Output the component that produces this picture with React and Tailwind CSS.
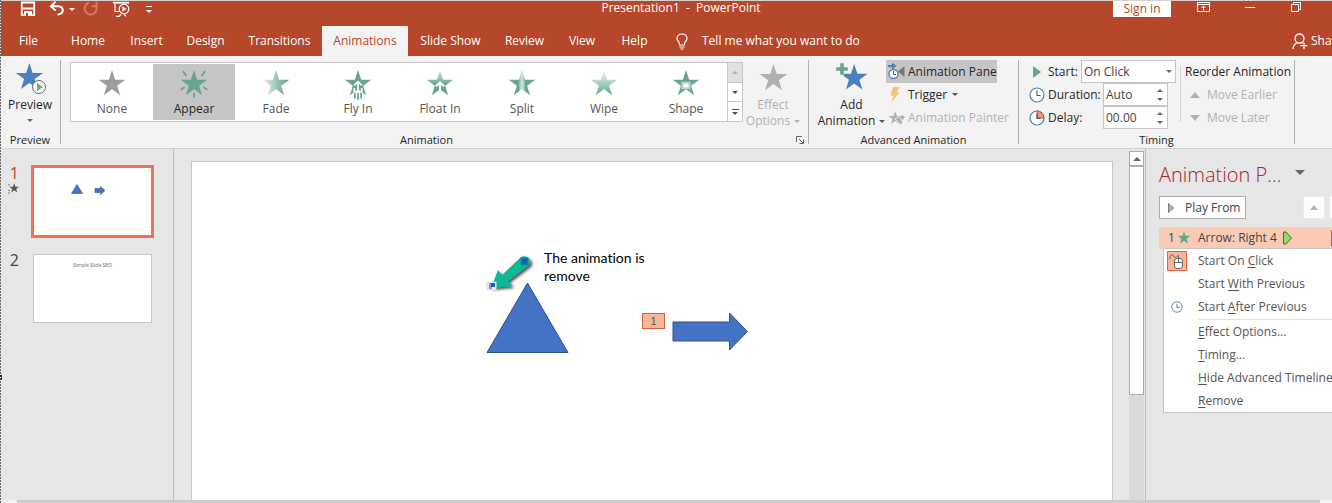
import React, { useState } from 'react'

const STAR = '12,0 14.7,8.3 23.4,8.3 16.4,13.4 19,21.7 12,16.6 5,21.7 7.6,13.4 0.6,8.3 9.3,8.3'

const tabs = [
    { name: 'File', width: 'w-[57px]' },
    { name: 'Home', width: 'w-[62px]' },
    { name: 'Insert', width: 'w-[55px]' },
    { name: 'Design', width: 'w-[63px]' },
    { name: 'Transitions', width: 'w-[85px]' },
    { name: 'Animations', width: 'w-[86px]' },
    { name: 'Slide Show', width: 'w-[85px]' },
    { name: 'Review', width: 'w-[63px]' },
    { name: 'View', width: 'w-[52px]' },
    { name: 'Help', width: 'w-[53px]' },
]

const effects = ['None', 'Appear', 'Fade', 'Fly In', 'Float In', 'Split', 'Wipe', 'Shape']

function Caret({ up, className = '' }) {
    return (
        <svg viewBox="0 0 6 3" className={`h-[3px] w-[6px] shrink-0 fill-current ${className}`}>
            <path d={up ? 'M0 3L3 0L6 3Z' : 'M0 0L3 3L6 0Z'} />
        </svg>
    )
}

function Star({ fill, className, children }) {
    return (
        <svg viewBox="0 0 24 24" className={className}>
            <polygon points={STAR} fill={fill} />
            {children}
        </svg>
    )
}

function EffectIcon({ name }) {
    const fills = { None: '#9d9d9d', Fade: 'url(#fade)', 'Float In': 'url(#float)', Split: 'url(#split)', Wipe: 'url(#wipe)' }

    return (
        <Star fill={fills[name] || '#68a490'} className="h-[28px] w-[28px] overflow-visible">
            {name === 'Appear' && (
                <path d="M2.5 1L5.5 5.2M21.5 1L18.5 5.2M0.5 17L4 14.8M23.5 17L20 14.8M12 19.5V23.5" stroke="#68a490" strokeWidth="1.6" />
            )}
            {name === 'Fly In' && (
                <g fill="none">
                    <path d="M12 19V9.5M8.8 13.2L12 10L15.2 13.2M8.8 19V15.5M15.2 19V15.5" stroke="#fff" strokeWidth="1.5" />
                    <path d="M9.3 19.5V24.5M12 19.5V25.5M14.7 19.5V24.5" stroke="#68a490" strokeWidth="1.5" />
                </g>
            )}
            {name === 'Float In' && (
                <path d="M12 19.5V10.5M8.6 14L12 10.6L15.4 14" fill="none" stroke="#fff" strokeWidth="1.8" />
            )}
            {name === 'Shape' && (
                <g>
                    <rect x="8" y="10" width="8" height="6.5" fill="#b5d3c9" />
                    <rect x="9.8" y="11.8" width="4.4" height="3" fill="#fff" />
                </g>
            )}
        </Star>
    )
}

function Gradients() {
    return (
        <svg className="absolute h-0 w-0">
            <defs>
                <linearGradient id="fade">
                    <stop offset="0" stopColor="#eaf3f0" />
                    <stop offset="0.9" stopColor="#68a490" />
                </linearGradient>
                <linearGradient id="float" x2="0" y2="1">
                    <stop offset="0" stopColor="#e0eeea" />
                    <stop offset="0.55" stopColor="#68a490" />
                </linearGradient>
                <linearGradient id="split">
                    <stop offset="0.38" stopColor="#68a490" />
                    <stop offset="0.39" stopColor="#8dbbac" />
                    <stop offset="0.5" stopColor="#d5e6e0" />
                    <stop offset="0.61" stopColor="#8dbbac" />
                    <stop offset="0.62" stopColor="#68a490" />
                </linearGradient>
                <linearGradient id="wipe" x2="0" y2="1">
                    <stop offset="0" stopColor="#f3f9f7" />
                    <stop offset="1" stopColor="#68a490" />
                </linearGradient>
            </defs>
        </svg>
    )
}

function Clock({ red, className }) {
    return (
        <svg viewBox="0 0 16 16" fill="none" className={className}>
            <circle cx="8" cy="8" r="7" fill="#fff" stroke="#4a80b4" strokeWidth="1.2" />
            {red && <path d="M8 8V1A7 7 0 0 1 15 8Z" fill="#ee9580" stroke="#d85236" />}
            <path d="M8 3.5V8.5H11.5" stroke="#555" strokeWidth="1.1" />
        </svg>
    )
}

function TitleBar() {
    return (
        <div className="grid h-[26px] grid-cols-[1fr_auto_1fr] border-t border-[#d8d0cd] text-white">
            <div className="flex items-start pl-[20px]">
                <button aria-label="Save">
                    <svg viewBox="0 0 16 16" className="h-4 w-4" fill="none">
                        <path d="M1.8 1.5H14.2V14.2H1.8Z" stroke="#fff" strokeWidth="1.8" />
                        <path d="M3 7.5H13" stroke="#fff" strokeWidth="2" />
                        <path d="M4 10.2H12V15H4Z" fill="#fff" />
                        <path d="M6 12H8V15H6Z" fill="#b7472a" />
                    </svg>
                </button>
                <button aria-label="Undo" className="ml-[13px] flex items-center">
                    <svg viewBox="0 0 16 16" className="h-4 w-4" fill="none" stroke="#fff" strokeWidth="2">
                        <path d="M6.5 0.8L2 5.2L6.5 9.6M2 5.2H9C15.5 5.2 15.5 13.4 8.5 13.4" />
                    </svg>
                    <Caret className="ml-[4px]" />
                </button>
                <button aria-label="Redo" className="ml-[8px] text-[#d07c66]">
                    <svg viewBox="0 0 16 16" className="h-4 w-4" fill="none" stroke="currentColor" strokeWidth="2">
                        <path d="M6 1.8A6 6 0 1 0 12.8 4.5M9 5.2H13.5V0.5" />
                    </svg>
                </button>
                <button aria-label="Start from beginning" className="ml-[13px]">
                    <svg viewBox="0 0 18 16" className="h-4 w-[18px]" fill="none" stroke="#fff">
                        <path d="M1 1.7H17" strokeWidth="1.8" />
                        <path d="M3 2.5V10.5H7M7 15.2L9 13.5M14 15.2L12 13.5M4 15.3H8" strokeWidth="1.2" />
                        <circle cx="12" cy="8" r="4.8" strokeWidth="1.2" />
                        <path d="M10.3 5.3V10.7L14.6 8Z" fill="#fff" stroke="none" />
                    </svg>
                </button>
                <button aria-label="Customize toolbar" className="mt-[5px] ml-[16px] flex flex-col gap-[3px]">
                    <span className="h-px w-[6px] bg-white" />
                    <Caret />
                </button>
            </div>

            <p className="pl-[30px] text-[12px] leading-[14px] whitespace-pre">Presentation1  -  PowerPoint</p>

            <div className="flex items-start justify-end">
                <button className="h-[16px] w-[58px] bg-white text-[12px] leading-[14px] text-[#b7472a]">Sign in</button>
                <button aria-label="Ribbon display options" className="ml-[26px]">
                    <svg viewBox="0 0 13 12" className="h-3 w-[13px]" fill="none" stroke="#fff">
                        <path d="M0.5 1.5H12.5V10.5H0.5ZM0.5 3.5H12.5M6.5 10V5M4.5 7L6.5 5L8.5 7" />
                    </svg>
                </button>
                <button aria-label="Minimize" className="mt-[6px] ml-[35px] h-px w-[10px] bg-white" />
                <button aria-label="Restore" className="mt-px mr-[31px] ml-[36px]">
                    <svg viewBox="0 0 10 10" className="h-[10px] w-[10px]" fill="none" stroke="#fff">
                        <path d="M0.5 2.5H7.5V9.5H0.5ZM2.5 2.5V0.5H9.5V7.5H7.5" />
                    </svg>
                </button>
            </div>
        </div>
    )
}

function TabBar({ active, setActive }) {
    return (
        <div className="flex h-[30px] text-[12px] text-white">
            {tabs.map(tab => (
                <button
                    key={tab.name}
                    onClick={() => setActive(tab.name)}
                    className={`shrink-0 whitespace-nowrap ${tab.width} ${active === tab.name ? 'bg-[#f3f3f3] text-[#b7472a]' : ''}`}
                >
                    {tab.name}
                </button>
            ))}
            <button className="ml-[15px] flex shrink-0 items-center gap-[14px]">
                <svg viewBox="0 0 12 17" className="h-[17px] w-[12px]" fill="none" stroke="#fff" strokeWidth="1.2">
                    <path d="M3.5 12V10.5C3.5 9 1 8 1 5.5C1 2.8 3.2 1 6 1S11 2.8 11 5.5C11 8 8.5 9 8.5 10.5V12ZM3.5 14H8.5M4.5 16H7.5" />
                </svg>
                Tell me what you want to do
            </button>
            <button className="ml-auto flex w-[40px] shrink-0 items-center gap-[3px] overflow-hidden">
                <svg viewBox="0 0 16 17" className="h-[17px] w-[16px] shrink-0" fill="none" stroke="#fff" strokeWidth="1.3">
                    <circle cx="7.5" cy="5.5" r="4.5" />
                    <path d="M1 16C1.2 12.5 3 10.5 5.5 9.7M9.5 9.5L11 10.3M12 9.5V16M8.5 12.7H15.5" />
                </svg>
                Share
            </button>
        </div>
    )
}

function Group({ label, className, labelClass = '', children, launcher }) {
    return (
        <section className={`relative flex h-[84px] shrink-0 flex-col justify-between border-r border-[#b1b1b1] ${className}`}>
            {children}
            <div className={`text-center text-[11px] leading-[8px] text-[#262626] ${labelClass}`}>{label}</div>
            {launcher && (
                <button aria-label="More animation options" className="absolute right-[4px] bottom-0">
                    <svg viewBox="0 0 8 8" className="h-2 w-2" fill="none" stroke="#666">
                        <path d="M0.5 6V0.5H6M3 3L7 7M7.5 3.5V7.5H3.5" />
                    </svg>
                </button>
            )}
        </section>
    )
}

function Ribbon() {
    const [selected, setSelected] = useState('Appear')

    return (
        <div className="flex h-[93px] shrink-0 overflow-hidden border-b border-[#d0d0d0] bg-[#f3f3f3] pt-[4px] text-[12px] text-[#262626]">
            <Group label="Preview" className="w-[61px]">
                <button className="flex flex-col items-center pt-[3px] leading-[16px]">
                    <svg viewBox="0 0 31 31" className="mb-[3px] h-[31px] w-[31px]">
                        <g transform="scale(1.2)"><polygon points={STAR} fill="#4a80bd" /></g>
                        <circle cx="24" cy="24" r="6.5" fill="#fff" stroke="#666" />
                        <path d="M22 20V28L28 24Z" fill="#68a490" />
                    </svg>
                    Preview
                    <Caret className="mt-[6px] text-[#666]" />
                </button>
            </Group>

            <Group label="Animation" className="w-[748px]" labelClass="pr-[16px]" launcher>
                <div className="ml-[9px] flex pt-[2px]">
                    <div className="flex h-[60px] border border-[#c6c6c6] bg-white">
                        <div className="flex py-px">
                            {effects.map(name => (
                                <button
                                    key={name}
                                    onClick={() => setSelected(name)}
                                    className={`flex w-[82px] flex-col items-center pt-[6px] leading-[22px] ${selected === name ? 'bg-[#c5c5c5] text-[#262626]' : 'text-[#555]'}`}
                                >
                                    <EffectIcon name={name} />
                                    {name}
                                </button>
                            ))}
                        </div>
                        <div className="flex w-[15px] flex-col border-l border-[#c6c6c6] text-[#555]">
                            <button aria-label="Previous effects" className="flex flex-1 items-center justify-center bg-[#e1e1e1] text-[#b1b1b1]"><Caret up /></button>
                            <button aria-label="Next effects" className="flex flex-1 items-center justify-center border-y border-[#c6c6c6]"><Caret /></button>
                            <button aria-label="All effects" className="flex flex-1 flex-col items-center justify-center gap-[2px]">
                                <span className="h-px w-[7px] bg-[#555]" />
                                <Caret />
                            </button>
                        </div>
                    </div>
                    <button disabled className="flex h-[60px] w-[60px] flex-col items-center pt-[2px] leading-[16px] text-[#b1b1b1]">
                        <Star fill="#b1afb0" className="mb-[4px] h-[29px] w-[29px] shrink-0" />
                        <span>Effect</span>
                        <span className="flex items-center gap-[4px]">Options <Caret /></span>
                    </button>
                </div>
            </Group>

            <Group label="Advanced Animation" className="w-[210px]">
                <div className="flex pl-[8px]">
                    <button className="flex w-[69px] flex-col items-center pt-[3px] leading-[16px]">
                        <svg viewBox="0 0 32 31" className="mb-[3px] h-[31px] w-[32px] shrink-0">
                            <g transform="translate(4 1) scale(1.18)"><polygon points={STAR} fill="#4a80bd" /></g>
                            <path d="M4 0H8V4H12V8H8V12H4V8H0V4H4Z" fill="#68a490" stroke="#f3f3f3" strokeWidth="0.5" />
                        </svg>
                        <span>Add</span>
                        <span className="flex items-center gap-[4px] whitespace-nowrap">Animation <Caret className="text-[#555]" /></span>
                    </button>
                    <div className="flex flex-col items-start">
                        <button className="flex h-[23px] items-center gap-[3px] bg-[#c5c5c5] pl-[2px] whitespace-nowrap">
                            <svg viewBox="0 0 17 17" className="h-[17px] w-[17px]" fill="none">
                                <path d="M0 3H6M4 0.5L7 3L4 5.5" stroke="#4a80bd" strokeWidth="1.8" />
                                <circle cx="5.5" cy="11" r="4.5" fill="#fff" stroke="#4a80b4" strokeWidth="1.3" />
                                <path d="M5.5 8V11.5H8" stroke="#555" />
                                <path d="M16.5 3V14L10 8.5Z" fill="#777" />
                            </svg>
                            Animation Pane
                        </button>
                        <button className="flex h-[23px] items-center gap-[5px] px-[2px]">
                            <svg viewBox="0 0 15 15" className="h-[15px] w-[15px] fill-[#f3c577]">
                                <path d="M5 0H12L8.5 5.5H11.5L3.5 15L5.5 8.5H2.5Z" />
                            </svg>
                            Trigger <Caret className="text-[#555]" />
                        </button>
                        <button disabled className="flex h-[23px] items-center gap-[3px] px-[2px] whitespace-nowrap text-[#b1b1b1]">
                            <svg viewBox="0 0 17 16" className="h-[16px] w-[17px]">
                                <g transform="translate(0 1) scale(0.6)"><polygon points={STAR} fill="#b1b1b1" /></g>
                                <path d="M7 9L11 6.5L15 12L12.5 15Z" fill="#b1b1b1" stroke="#f3f3f3" strokeWidth="0.8" />
                                <path d="M12 7.5L14 5L17 7L14.5 10Z" fill="#b1b1b1" />
                            </svg>
                            Animation Painter
                        </button>
                    </div>
                </div>
            </Group>

            <Group label="Timing" className="w-[276px]">
                <div className="flex pl-[10px]">
                    <div className="flex w-[147px] flex-col">
                        <div className="flex h-[23px] items-center">
                            <svg viewBox="0 0 8 12" className="ml-[4px] h-3 w-2 fill-[#68a490]"><path d="M0 0V12L8 6Z" /></svg>
                            <label htmlFor="start" className="ml-[7px]">Start:</label>
                            <div className="relative ml-auto h-[23px] w-[95px]">
                                <select id="start" className="h-full w-full appearance-none border border-[#c6c6c6] bg-white pl-[2px] text-[#444]">
                                    <option>On Click</option>
                                    <option>With Previous</option>
                                    <option>After Previous</option>
                                </select>
                                <Caret className="pointer-events-none absolute top-[10px] right-[4px] text-[#666]" />
                            </div>
                        </div>
                        <Spinner id="duration" label="Duration:" value="Auto" />
                        <Spinner id="delay" label="Delay:" value="00.00" red />
                    </div>
                    <div className="mt-[6px] ml-[4px] h-[56px] w-px bg-[#d4d4d4]" />
                    <div className="ml-[4px] leading-[23px] whitespace-nowrap">
                        <p>Reorder Animation</p>
                        <button disabled className="flex items-center gap-[7px] pl-[5px] text-[#b1b1b1]">
                            <svg viewBox="0 0 10 6" className="h-[6px] w-[10px] fill-current"><path d="M0 6L5 0L10 6Z" /></svg>
                            Move Earlier
                        </button>
                        <button disabled className="flex items-center gap-[7px] pl-[5px] text-[#b1b1b1]">
                            <svg viewBox="0 0 10 6" className="h-[6px] w-[10px] fill-current"><path d="M0 0L5 6L10 0Z" /></svg>
                            Move Later
                        </button>
                    </div>
                </div>
            </Group>
        </div>
    )
}

function Spinner({ id, label, value, red }) {
    return (
        <div className="flex h-[23px] items-center pr-[8px]">
            <Clock red={red} className="h-[16px] w-[16px]" />
            <label htmlFor={id} className="ml-[3px]">{label}</label>
            <div className="ml-auto flex h-[23px] w-[65px] border border-[#c6c6c6] bg-white">
                <input id={id} defaultValue={value} className="w-[53px] pl-[2px] text-[#444] outline-none" />
                <div className="flex flex-col justify-center gap-[6px] pr-[4px] text-[#666]">
                    <button aria-label={`Increase ${id}`}><Caret up className="block" /></button>
                    <button aria-label={`Decrease ${id}`}><Caret className="block" /></button>
                </div>
            </div>
        </div>
    )
}

function Thumbnails() {
    return (
        <aside className="flex w-[174px] shrink-0 flex-col gap-[16px] border-r border-[#bdbdbd] pt-[16px]">
            <div className="flex">
                <div className="flex w-[31px] flex-col items-end pr-[12px] text-[#c43e1c]">
                    <span className="text-[16px] leading-[16px]">1</span>
                    <svg viewBox="0 0 12 12" className="mt-[2px] h-[11px] w-[11px]">
                        <g transform="translate(1 0) scale(0.48)"><polygon points={STAR} fill="#555" /></g>
                        <path d="M0 2H2M0 8H2M0 11H2" stroke="#666" />
                    </svg>
                </div>
                <button aria-label="Slide 1" className="h-[73px] w-[123px] border-3 border-[#ef7350] bg-white">
                    <svg viewBox="0 0 117 67" className="h-full w-full" fill="#4472c4" stroke="#2f528f" strokeWidth="0.6">
                        <path d="M43 16.5L48.5 25.5H37.5Z" />
                        <path d="M61 20.5H66.5V18.5L71 22.5L66.5 26.5V24.5H61Z" />
                    </svg>
                </button>
            </div>
            <div className="flex">
                <span className="w-[33px] pr-[14px] text-right text-[16px] leading-[12px] text-[#444]">2</span>
                <button aria-label="Slide 2" className="flex h-[69px] w-[119px] justify-center border border-[#c6c6c6] bg-white pt-[6px] text-[5px] leading-[8px] text-[#666]">
                    Simple Slide SEO
                </button>
            </div>
        </aside>
    )
}

function Slide() {
    return (
        <main className="flex min-w-0 flex-1 border-r border-[#bdbdbd]">
            <div className="relative mt-[12px] ml-[17px] flex-1 overflow-hidden border-x border-t border-[#c6c6c6] bg-white">
                {/* shapes placed on the slide */}
                <svg width="270" height="110" viewBox="0 0 270 110" className="absolute top-[90px] left-[290px]" fill="#4472c4" stroke="#2f528f">
                    <defs>
                        <filter id="shadow" x="-20%" y="-20%" width="150%" height="150%">
                            <feDropShadow dx="2" dy="2" stdDeviation="1.5" floodColor="#000" floodOpacity="0.7" />
                        </filter>
                    </defs>
                    <path d="M45.5 31L86 100.5H5Z" />
                    <path d="M191 70H247.5V61L265.5 79.5L247.5 98V89H191Z" />
                    <path d="M39 5C44 2 51 8 47 13L26 29L30 34L9 36L16 18L20 23Z" fill="#08b898" stroke="none" filter="url(#shadow)" />
                    <rect x="5" y="30" width="9" height="8" fill="#ececf5" stroke="#ddd" />
                    <rect x="7" y="31" width="3" height="6" fill="#8d8de0" stroke="none" />
                    <rect x="9" y="31" width="4" height="4" fill="#0868b0" stroke="none" />
                    <rect x="39" y="6" width="7" height="7" fill="#0868b0" stroke="#168da5" />
                </svg>
                <p className="absolute top-[87px] left-[352px] w-[120px] font-[Lato,sans-serif] text-[14px] leading-[18px] text-black [font-variant-ligatures:none]">
                    The animation is remove
                </p>
                <span className="absolute top-[151px] left-[450px] h-[16px] w-[23px] border border-[#dc5b3b] bg-[#f6b79c] text-center font-['Liberation_Sans',sans-serif] text-[11px] leading-[14px] text-[#555]">
                    1
                </span>
            </div>
            <div className="ml-[16px] flex w-[16px] flex-col pt-[2px] pr-px">
                <div className="flex-1 bg-[#dadada]">
                    <button aria-label="Scroll up" className="flex h-[15px] w-full items-center justify-center border border-[#ababab] bg-white text-[#666]">
                        <svg viewBox="0 0 8 4" className="h-[4px] w-[8px] fill-current"><path d="M0 4L4 0L8 4Z" /></svg>
                    </button>
                    <div className="h-[229px] border border-[#ababab] bg-white" />
                </div>
            </div>
        </main>
    )
}

function MenuItem({ before = '', letter, after, icon }) {
    return (
        <li>
            <button className="flex h-[23px] w-full items-center whitespace-nowrap">
                <span className="flex w-[34px] shrink-0 pl-[3px]">{icon}</span>
                <span>{before}<span className="underline underline-offset-2">{letter}</span>{after}</span>
            </button>
        </li>
    )
}

function AnimationPane() {
    return (
        <aside className="relative w-[186px] shrink-0 overflow-hidden pl-[13px] text-[12px] text-[#444]">
            <div className="flex items-center pt-[12px]">
                <h2 className="w-[136px] text-[20px] leading-[28px] font-light whitespace-nowrap text-[#a4262c]">Animation P...</h2>
                <button aria-label="Pane options" className="mb-[6px] text-[#666]">
                    <svg viewBox="0 0 10 5" className="h-[5px] w-[10px] fill-current"><path d="M0 0L5 5L10 0Z" /></svg>
                </button>
            </div>
            <div className="mt-[7px] flex">
                <button className="flex h-[23px] w-[87px] shrink-0 items-center gap-[11px] border border-[#ababab] bg-[#fdfdfd] pl-[8px] whitespace-nowrap">
                    <svg viewBox="0 0 6 10" className="h-[10px] w-[6px]"><path d="M0.5 0.5V9.5L5.5 5Z" fill="#b5b5b5" stroke="#777" /></svg>
                    Play From
                </button>
                <button disabled aria-label="Move up" className="ml-[57px] flex h-[23px] w-[22px] shrink-0 items-center justify-center border border-[#ececec] bg-[#fdfdfd] text-[#b5b5b5]">
                    <svg viewBox="0 0 8 5" className="h-[5px] w-[8px] fill-current"><path d="M0 5L4 0L8 5Z" /></svg>
                </button>
                <button disabled aria-label="Move down" className="ml-[4px] h-[23px] w-[22px] shrink-0 border border-[#ececec] bg-[#fdfdfd]" />
            </div>
            <div className="mt-[8px] flex h-[22px] items-center bg-[#f9cbb5] pl-[9px] whitespace-nowrap">
                <span className="w-[9px]">1</span>
                <Star fill="#68a490" className="h-[14px] w-[14px]" />
                <span className="ml-[7px] w-[85px]">Arrow: Right 4</span>
                <svg viewBox="0 0 9 14" className="h-[14px] w-[9px]"><path d="M0.5 1V13H3L8.5 7L3 1Z" fill="#98d86e" stroke="#3f6f2a" /></svg>
                <span className="ml-auto h-[16px] w-px bg-[#dc5b3b]" />
            </div>

            <ul className="absolute top-[99px] right-0 left-[17px] border-y border-l border-[#c6c6c6] bg-white text-[#555]">
                <MenuItem before="Start On " letter="C" after="lick" icon={
                    <svg viewBox="0 0 20 20" className="h-[20px] w-[20px]" fill="none">
                        <path d="M0.5 0.5H19.5V19.5H0.5Z" fill="#f6b79c" stroke="#e8603c" />
                        <path d="M3 8C2 5 5 2 6.5 5S10 5 11.5 4.5V7" stroke="#666" />
                        <rect x="7.5" y="7.5" width="8" height="10" rx="2.5" fill="#fff" stroke="#666" />
                        <path d="M7.5 11.5H15.5M11.5 7.5V11.5" stroke="#666" />
                    </svg>
                } />
                <MenuItem before="Start " letter="W" after="ith Previous" />
                <MenuItem before="Start " letter="A" after="fter Previous" icon={<Clock className="ml-[4px] h-[12px] w-[12px]" />} />
                <li className="mt-px ml-[34px] h-px bg-[#e1e1e1]" />
                <MenuItem letter="E" after="ffect Options..." />
                <MenuItem letter="T" after="iming..." />
                <MenuItem letter="H" after="ide Advanced Timeline" />
                <MenuItem letter="R" after="emove" />
            </ul>
        </aside>
    )
}

function App() {
    const [activeTab, setActiveTab] = useState('Animations')

    return (
        <div className="relative flex h-screen flex-col overflow-hidden bg-[#e6e6e6] font-['Open_Sans','Noto_Sans',sans-serif]">
            <Gradients />
            <header className="bg-[#b7472a]">
                <TitleBar />
                <TabBar active={activeTab} setActive={setActiveTab} />
            </header>
            <Ribbon />
            <div className="flex min-h-0 flex-1">
                <Thumbnails />
                <Slide />
                <AnimationPane />
            </div>
            <div className="h-[3px] shrink-0 bg-[#f0f0f0] pr-[12px] pl-[17px]">
                <div className="h-full bg-[#cdcdcd]" />
            </div>

            {/* selection edge down the left side */}
            <div className="absolute inset-y-0 left-0 w-px bg-[repeating-linear-gradient(to_bottom,#666_0_2px,#eee_2px_3px)]" />
            <div className="absolute top-[375px] left-0 h-[5px] w-[2px] border-y-2 border-r border-[#333] bg-white" />
        </div>
    )
}

export default App
